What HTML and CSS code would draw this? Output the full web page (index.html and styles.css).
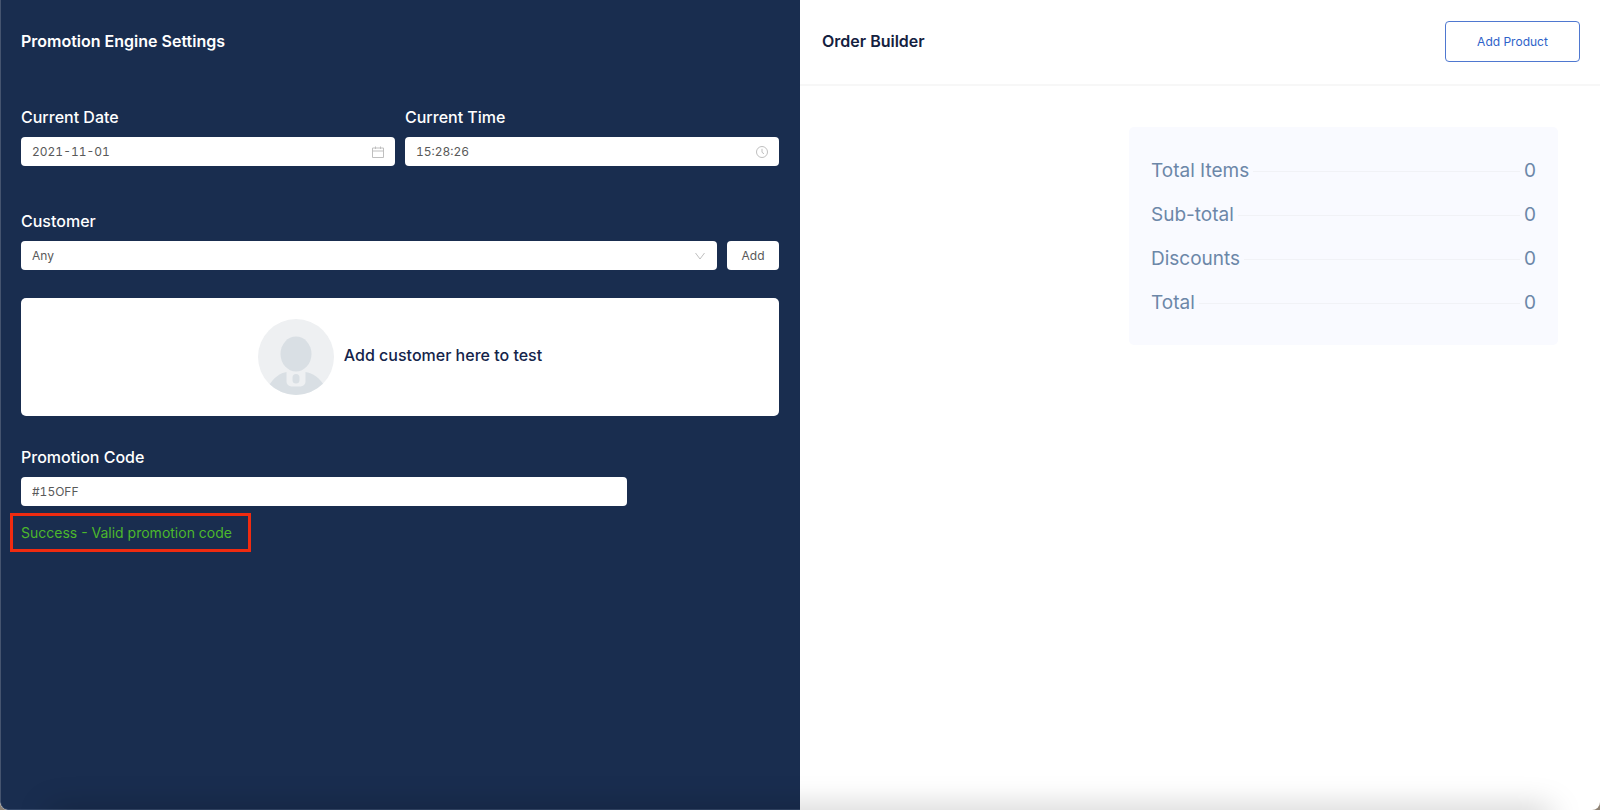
FILE: index.html
```html
<!DOCTYPE html>
<html lang="en">
<head>
<meta charset="utf-8">
<meta name="viewport" content="width=device-width, initial-scale=1">
<title>Promotion Engine</title>
<link rel="stylesheet" href="styles.css">
</head>
<body>
<div class="window">
  <form class="settings">
    <h1 class="title">Promotion Engine Settings</h1>
    <div class="row">
      <div class="field">
        <label class="label" for="date">Current Date</label>
        <div class="control">
          <input class="input" id="date" type="text" value="2021-11-01">
          <svg class="icon" viewBox="0 0 12 12" aria-hidden="true"><path d="M.5 2h11v9.500H.5zM.5 5h11M3.500 .5v2.500M8.500 .5v2.500"/></svg>
        </div>
      </div>
      <div class="field">
        <label class="label" for="time">Current Time</label>
        <div class="control">
          <input class="input" id="time" type="text" value="15:28:26">
          <svg class="icon" viewBox="0 0 12 12" aria-hidden="true"><circle cx="6" cy="6" r="5.500"/><path d="M6 2.800v3.500l2 1.500"/></svg>
        </div>
      </div>
    </div>
    <div class="field">
      <label class="label" for="customer">Customer</label>
      <div class="row">
        <div class="control control-grow">
          <select class="input" id="customer"><option>Any</option></select>
          <svg class="icon" viewBox="0 0 12 12" aria-hidden="true"><path d="M1.500 3 6 9l4.500-6"/></svg>
        </div>
        <button class="add" type="button">Add</button>
      </div>
    </div>
    <section class="customer">
      <svg class="avatar" viewBox="0 0 76 76" aria-hidden="true">
        <defs><clipPath id="disc"><circle cx="38" cy="38" r="38"/></clipPath></defs>
        <circle cx="38" cy="38" r="38" fill="#eef0f2"/>
        <g clip-path="url(#disc)">
          <path d="M10 68C16 58 22 54 29 53h18c8 1 15 6 20 15L56 80H20z" fill="#d9dfe4"/>
          <path d="M28.500 50h19v12.500a5 5 0 0 1-5 5h-9a5 5 0 0 1-5-5z" fill="#eef0f2"/>
          <ellipse cx="38" cy="35" rx="15.500" ry="17.500" fill="#d9dfe4"/>
          <rect x="34.500" y="55" width="7" height="9.500" rx="3.500" fill="#d9dfe4"/>
        </g>
      </svg>
      <p class="customer-text">Add customer here to test</p>
    </section>
    <div class="field">
      <label class="label" for="code">Promotion Code</label>
      <input class="input code" id="code" type="text" value="#15OFF">
      <output class="status" for="code">Success - Valid promotion code</output>
    </div>
  </form>
  <main class="order">
    <header class="order-head">
      <h2 class="title">Order Builder</h2>
      <button class="add-product" type="button">Add Product</button>
    </header>
    <dl class="summary">
      <div class="line"><dt>Total Items</dt><dd>0</dd></div>
      <div class="line"><dt>Sub-total</dt><dd>0</dd></div>
      <div class="line"><dt>Discounts</dt><dd>0</dd></div>
      <div class="line"><dt>Total</dt><dd>0</dd></div>
    </dl>
  </main>
</div>
</body>
</html>
```
FILE: styles.css
```css
* { box-sizing: border-box; }
body {
  margin: 0;
  background: #8f8375;
  font-family: Inter, "Liberation Sans", sans-serif;
  font-size: 12px;
}
.window {
  display: grid;
  grid-template-columns: 1fr 1fr;
  min-height: 100vh;
  position: relative;
  overflow: hidden;
  border-radius: 0 0 8px 8px;
  background: #fff;
}
.window::after {
  content: "";
  position: absolute;
  left: 50px;
  right: 50px;
  top: 100%;
  height: 20px;
  box-shadow: 0 0 32px rgba(0, 0, 0, 0.25);
}
.settings {
  padding: 21px 21px 21px 20px;
  background: #192d4f;
  border-left: 1px solid #45546f;
  border-bottom: 1px solid #344869;
  border-bottom-left-radius: 8px;
}
.title {
  margin: 0;
  font-size: 16px;
  line-height: 40px;
  font-weight: 600;
  color: #14213f;
}
.settings .title { color: #fff; margin-bottom: 43px; }
.row { display: flex; gap: 10px; }
.field { flex: 1; margin-bottom: 28px; }
.row .field { margin-bottom: 42px; }
.label {
  display: block;
  margin-bottom: 7px;
  font-size: 16px;
  line-height: 26px;
  font-weight: 500;
  color: #fff;
}
.control { position: relative; }
.control-grow { flex: 1; }
.input {
  display: block;
  width: 100%;
  height: 29px;
  padding: 0 11px;
  border: 0;
  border-radius: 4px;
  background: #fff;
  color: #595959;
  font: inherit;
  font-variant-numeric: tabular-nums;
  appearance: none;
}
.icon {
  position: absolute;
  right: 11px;
  top: 9px;
  width: 12px;
  height: 12px;
  fill: none;
  stroke: #bfbfbf;
  pointer-events: none;
}
.add {
  width: 52px;
  border: 0;
  border-radius: 4px;
  background: #fff;
  color: #595959;
  font: inherit;
}
.customer {
  display: flex;
  justify-content: center;
  align-items: center;
  gap: 10px;
  height: 118px;
  margin-bottom: 28px;
  border-radius: 5px;
  background: #fff;
}
.avatar { width: 76px; height: 76px; }
.customer-text {
  margin: 0 0 4px;
  font-size: 16px;
  font-weight: 500;
  color: #14244a;
}
.code { width: 80%; }
.status {
  display: block;
  width: 241px;
  margin: 7px 0 0 -11px;
  padding: 0 8px;
  border: 3px solid #ef2b10;
  font-size: 14px;
  line-height: 33px;
  color: #4cb82c;
}
.order-head {
  display: flex;
  justify-content: space-between;
  padding: 21px 20px 22px 22px;
  border-bottom: 2px solid #f7f7f7;
}
.add-product {
  width: 135px;
  height: 41px;
  border: 1px solid #4f78d0;
  border-radius: 4px;
  background: #fff;
  color: #2e62c9;
  font: inherit;
}
.summary {
  width: 429px;
  margin: 41px 42px 0 auto;
  padding: 22px 22px 20px;
  border-radius: 5px;
  background: #f9faff;
  font-size: 19px;
  color: #6c87a8;
}
.line { display: flex; align-items: center; gap: 4px; line-height: 44px; }
.line::before { content: ""; order: 1; flex: 1; height: 1px; background: #f1f2f6; }
.line dd { order: 2; margin: 0; }
```
